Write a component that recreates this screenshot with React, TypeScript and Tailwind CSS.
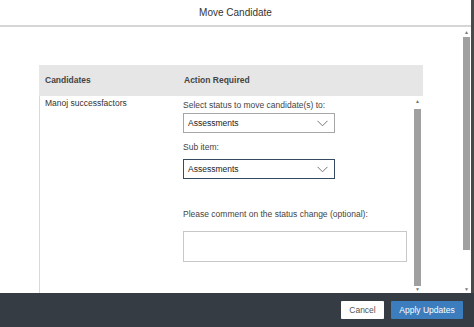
function Chevron() {
  return (
    <svg width="11" height="7" viewBox="0 0 11 7" fill="none" stroke="#777" strokeWidth={1}>
      <polyline points="0.5,0.8 5.5,5.8 10.5,0.8" />
    </svg>
  );
}

function Select({ value, focused }: { value: string; focused?: boolean }) {
  return (
    <div
      className={`w-[152px] h-[20px] flex items-center justify-between pl-[4px] pr-[6px] bg-white ${
        focused ? "border-[1.5px] border-[#354a5f]" : "border border-[#a6a6a6]"
      }`}
    >
      <span className="text-[8.5px] text-[#222]">{value}</span>
      <Chevron />
    </div>
  );
}

function Scrollbar({ top, bottom }: { top: number; bottom: number }) {
  return (
    <div className="w-[7px] h-full flex flex-col items-center">
      <span className="text-[5px] leading-[6px] text-[#777] mt-[2px]">▲</span>
      <div className="w-full bg-[#a0a0a0]" style={{ marginTop: top, marginBottom: bottom, flex: 1 }} />
      <span className="text-[5px] leading-[6px] text-[#777] mb-[1px]">▼</span>
    </div>
  );
}

export default function App() {
  return (
    <div
      className="w-[474px] h-[327px] flex flex-col bg-white overflow-hidden"
      style={{ fontFamily: '"Liberation Sans", Arial, sans-serif' }}
    >
      <div className="flex flex-1 min-h-0">
        <div className="flex-1 flex flex-col min-w-0">
          <div className="h-[25px] flex items-center justify-center text-[10px] text-[#333]">
            Move Candidate
          </div>
          <div className="h-[2px] bg-[#d6d6d6]" />
          <div className="flex flex-1 min-h-0">
            <div className="flex-1 min-w-0 pt-[38px] pl-[39px] overflow-hidden">
              <div className="w-[384px]">
                <div className="h-[31px] flex items-center bg-[#e6e6e6] text-[8.5px] font-bold text-[#444]">
                  <div className="w-[144px] pl-[6px]">Candidates</div>
                  <div className="pl-[1px]">Action Required</div>
                </div>
                <div className="flex border-l border-[#d9d9d9] h-[240px]">
                  <div className="w-[143px] pl-[5px] pt-[1px] text-[8.5px] text-[#333]">
                    Manoj successfactors
                  </div>
                  <div className="flex-1 flex flex-col pt-[3px] text-[8.5px] text-[#444]">
                    <div className="leading-[12px]">Select status to move candidate(s) to:</div>
                    <div className="mt-[2px]">
                      <Select value="Assessments" />
                    </div>
                    <div className="mt-[8px] leading-[12px]">Sub item:</div>
                    <div className="mt-[6px]">
                      <Select value="Assessments" focused />
                    </div>
                    <div className="mt-[29px] leading-[12px]">
                      Please comment on the status change (optional):
                    </div>
                    <div className="mt-[11px] w-[224px] h-[31px] border border-[#c8c8c8] bg-white" />
                  </div>
                  <div className="w-[7px] mr-[2px] h-[197px]">
                    <Scrollbar top={5} bottom={0} />
                  </div>
                </div>
              </div>
            </div>
            <div className="w-[9px] pl-[1px] pr-[1px]">
              <Scrollbar top={2} bottom={36} />
            </div>
          </div>
        </div>
        <div className="w-[3px] bg-[#4a4a4a]" />
      </div>
      <div className="h-[34px] bg-[#353c43] flex items-center justify-end gap-[7px] pr-[11px]">
        <button className="w-[43px] h-[18px] bg-white text-[8.5px] text-[#555] rounded-[1px]">
          Cancel
        </button>
        <button className="w-[72px] h-[18px] bg-[#3b7dbd] text-[8.5px] text-white rounded-[1px]">
          Apply Updates
        </button>
      </div>
    </div>
  );
}
